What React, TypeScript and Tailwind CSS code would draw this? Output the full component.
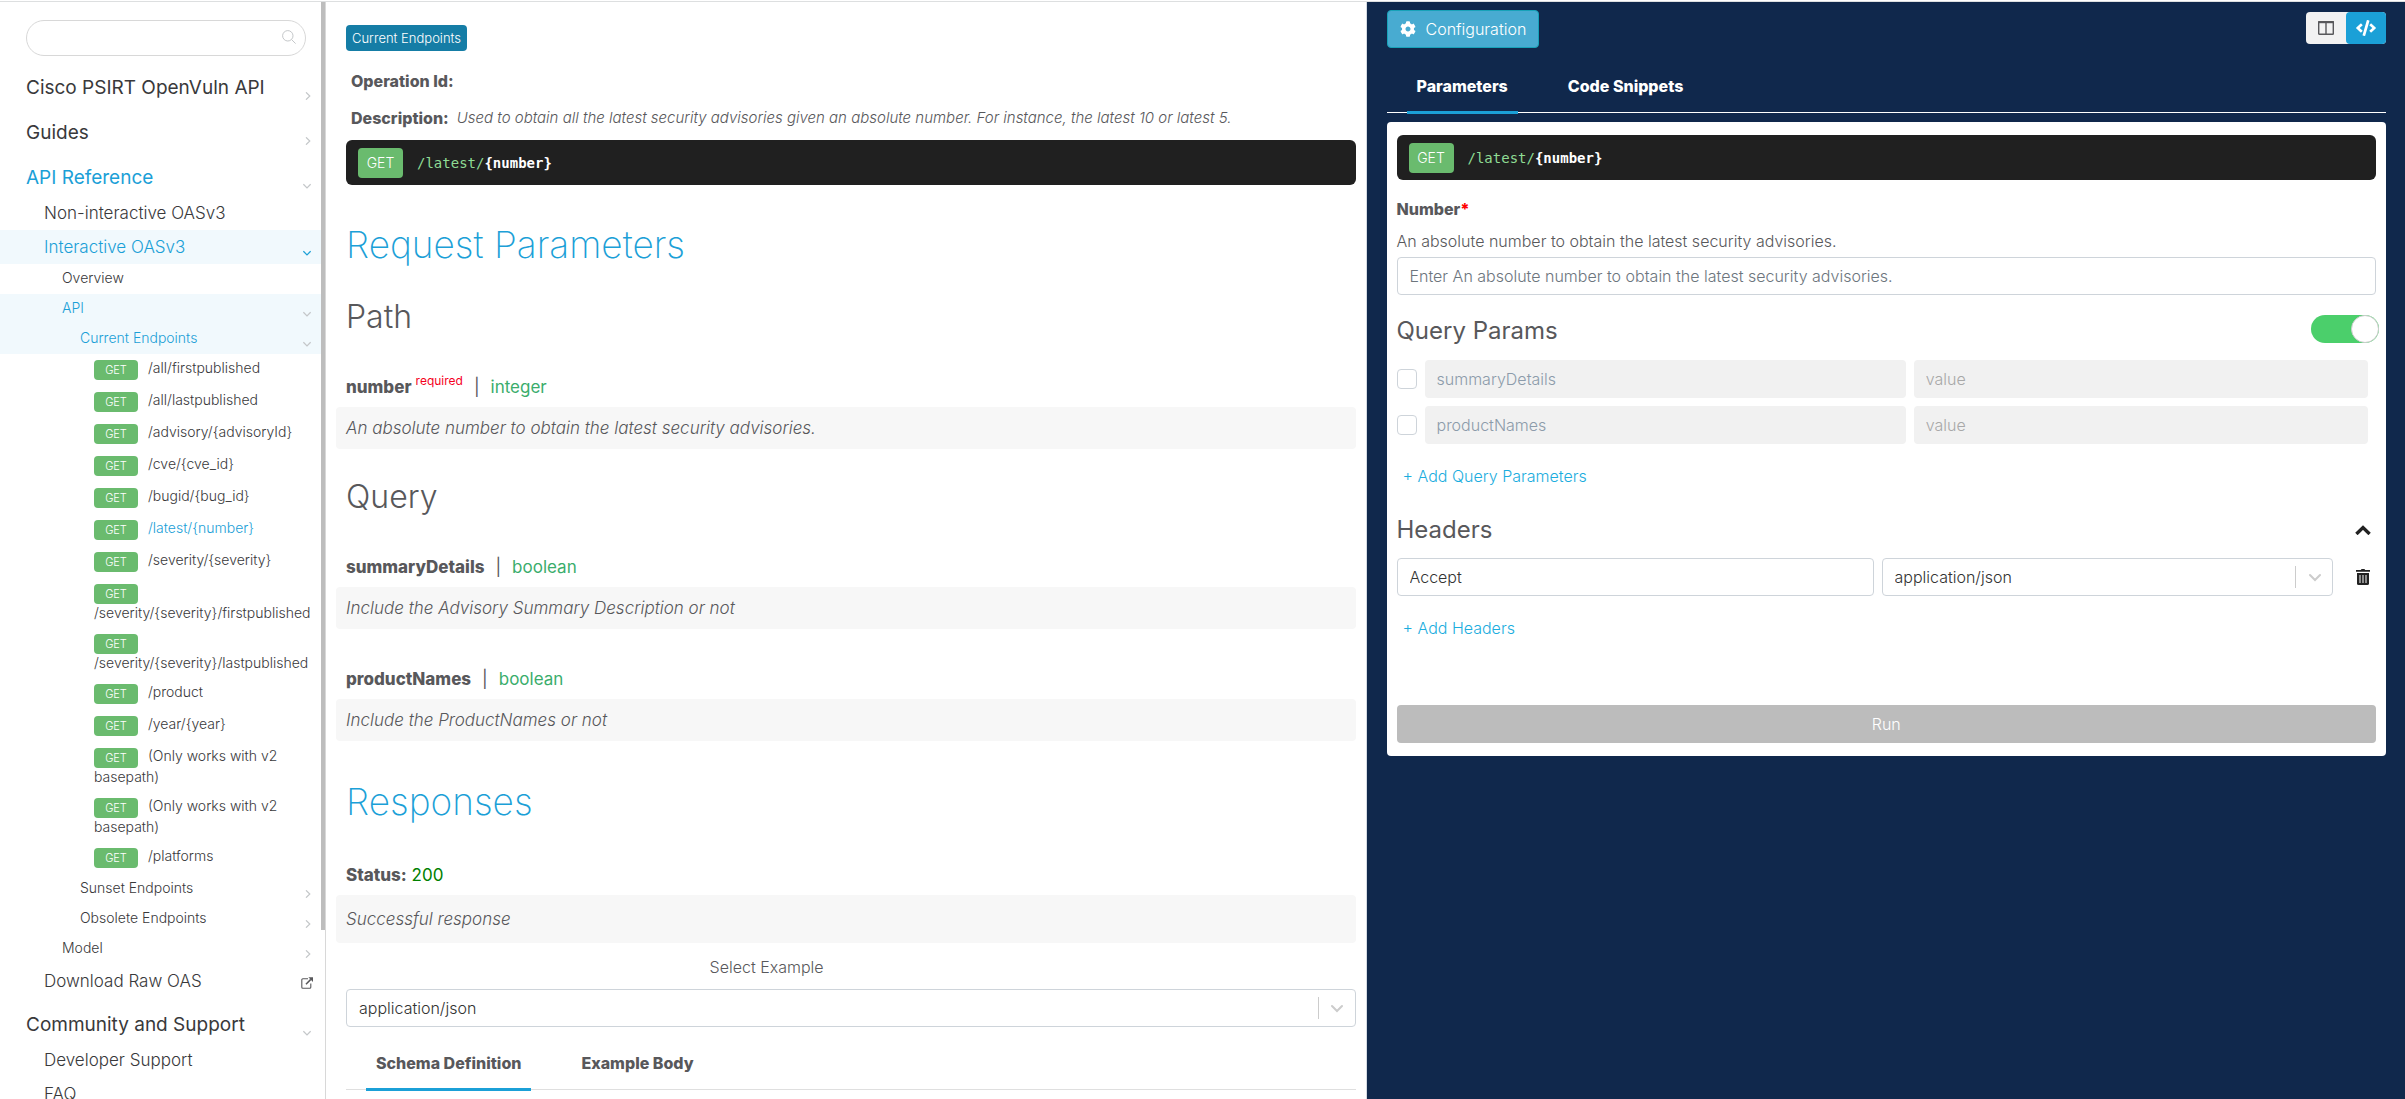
import { useState } from 'react';
import type { ReactNode } from 'react';
import { FaCog, FaCode } from 'react-icons/fa';

type Chevron = 'right' | 'down' | 'external';

interface NavItem {
  label: string;
  level: 1 | 2 | 3 | 4;
  icon?: Chevron;
  active?: boolean;
  highlighted?: boolean;
  iconActive?: boolean;
}

const topNav: NavItem[] = [
  { label: 'Cisco PSIRT OpenVuln API', level: 1, icon: 'right' },
  { label: 'Guides', level: 1, icon: 'right' },
  { label: 'API Reference', level: 1, icon: 'down', active: true },
  { label: 'Non-interactive OASv3', level: 2 },
  { label: 'Interactive OASv3', level: 2, icon: 'down', active: true, highlighted: true, iconActive: true },
  { label: 'Overview', level: 3 },
  { label: 'API', level: 3, icon: 'down', active: true, highlighted: true },
  { label: 'Current Endpoints', level: 4, icon: 'down', active: true, highlighted: true },
];

const endpoints = [
  '/all/firstpublished',
  '/all/lastpublished',
  '/advisory/{advisoryId}',
  '/cve/{cve_id}',
  '/bugid/{bug_id}',
  '/latest/{number}',
  '/severity/{severity}',
  '/severity/{severity}/firstpublished',
  '/severity/{severity}/lastpublished',
  '/product',
  '/year/{year}',
  '(Only works with v2 basepath)',
  '(Only works with v2 basepath)',
  '/platforms',
];

const bottomNav: NavItem[] = [
  { label: 'Sunset Endpoints', level: 4, icon: 'right' },
  { label: 'Obsolete Endpoints', level: 4, icon: 'right' },
  { label: 'Model', level: 3, icon: 'right' },
  { label: 'Download Raw OAS', level: 2, icon: 'external' },
  { label: 'Community and Support', level: 1, icon: 'down' },
  { label: 'Developer Support', level: 2 },
  { label: 'FAQ', level: 2 },
];

const levelStyles: Record<NavItem['level'], { row: string; icon: string }> = {
  1: { row: 'pl-[26px] pt-[15px] pb-[6px] text-[19px] leading-6', icon: 'mt-4' },
  2: { row: 'pl-11 py-[5px] text-[17px] leading-6 font-light', icon: 'mt-[14px]' },
  3: { row: 'pl-[62px] pt-1 pb-[6px] text-sm leading-5 font-light', icon: 'mt-3' },
  4: { row: 'pl-20 pt-1 pb-[6px] text-sm leading-5 font-light', icon: 'mt-3' },
};

function NavIcon({ type }: { type: Chevron }) {
  if (type === 'external') {
    return (
      <svg className="w-3 h-3 text-[#58585b]" viewBox="0 0 12 12" fill="none" stroke="currentColor">
        <path d="M7 1.8H1.8a1 1 0 0 0-1 1v7.4a1 1 0 0 0 1 1h7a1 1 0 0 0 1-1V6.5" strokeWidth="1.1" />
        <path d="M5 7.2L9.8 2.4" strokeWidth="1.5" />
        <path d="M7.4.3H12v4.6z" fill="currentColor" stroke="none" />
      </svg>
    );
  }
  return (
    <svg className="w-2 h-2" viewBox="0 0 8 8" fill="none" stroke="currentColor" strokeWidth="1.2">
      {type === 'down' ? <path d="M.4 2.2L4 5.8l3.6-3.6" /> : <path d="M3 .3L6.8 4 3 7.7" />}
    </svg>
  );
}

function NavRow({ item }: { item: NavItem }) {
  const styles = levelStyles[item.level];
  return (
    <li>
      <a
        href="#"
        className={`flex justify-between pr-[14px] ${styles.row} ${item.active ? 'text-[#1ba0d7]' : 'text-[#39393b]'} ${item.highlighted ? 'bg-[#f1f9fd]' : ''}`}
      >
        <span>{item.label}</span>
        {item.icon && (
          <span className={`${item.icon === 'external' ? 'mt-2 -mr-[2px]' : styles.icon} ${item.iconActive ? 'text-[#1ba0d7]' : 'text-[#c4c7c9]'}`}>
            <NavIcon type={item.icon} />
          </span>
        )}
      </a>
    </li>
  );
}

function Sidebar() {
  return (
    <nav className="relative w-[326px] shrink-0 border-r border-[#d8d8d8] overflow-hidden">
      <div className="relative mt-[18px] mb-[5px] ml-[26px] mr-[19px]">
        <input type="search" aria-label="Search" className="w-full h-9 rounded-full border border-[#d8d8d8] px-4 text-sm outline-none" />
        <svg className="absolute right-[10px] top-[10px] w-[14px] h-[14px]" viewBox="0 0 14 14" fill="none" stroke="#c4c7c9">
          <circle cx="5.8" cy="5.8" r="5.2" />
          <path d="M9.6 9.6l4 4" />
        </svg>
      </div>
      <ul>
        {topNav.map((item) => (
          <NavRow key={item.label} item={item} />
        ))}
        {endpoints.map((path, i) => (
          <li key={i}>
            <a
              href="#"
              className={`block pl-[94px] pr-4 pt-[5px] pb-[6px] text-sm leading-[18px] font-light ${path === '/latest/{number}' ? 'text-[#1ba0d7]' : 'text-[#39393b]'}`}
            >
              <span className="inline-block w-11 h-5 mt-px mr-[6px] rounded-[4px] bg-[#6abb6e] text-center align-middle text-[11px] leading-5 text-white">
                GET
              </span>{' '}
              <span className={path.startsWith('/') ? 'inline-block' : ''}>{path}</span>
            </a>
          </li>
        ))}
        {bottomNav.map((item) => (
          <NavRow key={item.label} item={item} />
        ))}
      </ul>
      {/* Scroll thumb */}
      <div className="absolute top-0 right-0 w-1 h-[928px] bg-[#bdbdbd]" />
    </nav>
  );
}

function EndpointBar() {
  return (
    <div className="flex items-center h-[45px] px-3 rounded-md bg-[#202020]">
      <span className="w-[45px] h-[30px] rounded-[4px] bg-[#6abb6e] text-center text-sm leading-[30px] font-light text-white">GET</span>
      <code className="ml-[14px] font-['DejaVu_Sans_Mono',monospace] text-sm text-[#8fdc94]">
        /latest/<b className="text-white">{'{number}'}</b>
      </code>
    </div>
  );
}

interface SelectBoxProps {
  id: string;
  value: string;
  label?: string;
  className?: string;
}

function SelectBox({ id, value, label, className }: SelectBoxProps) {
  return (
    <div className={`relative ${className ?? ''}`}>
      <select
        id={id}
        aria-label={label}
        defaultValue={value}
        className="block w-full h-[38px] appearance-none rounded-[4px] border border-[#ced4da] bg-white px-3 text-base font-light text-[#333] outline-none"
      >
        <option>{value}</option>
      </select>
      <span className="pointer-events-none absolute right-0 inset-y-2 flex w-[38px] items-center justify-center border-l border-[#ccc]">
        <svg className="w-3 h-3" viewBox="0 0 12 12" fill="none" stroke="#ccc" strokeWidth="2" strokeLinecap="round">
          <path d="M1 4l5 5 5-5" />
        </svg>
      </span>
    </div>
  );
}

function Param({ name, type, required, children }: { name: string; type: string; required?: boolean; children: ReactNode }) {
  return (
    <section>
      <h4 className="flex items-center text-[17px] leading-6">
        <b className="font-extrabold">{name}</b>
        {required && <span className="ml-1 pb-3 text-xs leading-3 text-[#f5001d]">required</span>}
        <span className="mx-[11px]">|</span>
        <span className="text-[#3aad6c]">{type}</span>
      </h4>
      <p className="mt-2 -ml-[10px] px-[10px] py-[9px] rounded-[4px] bg-[#f7f7f7] text-[17px] leading-6 font-light italic">{children}</p>
    </section>
  );
}

function Tabs({ tabs, dark }: { tabs: string[]; dark?: boolean }) {
  const [selected, setSelected] = useState(tabs[0]);
  return (
    <div
      className={`flex gap-10 pl-5 ${dark ? 'shadow-[inset_0_-1px_0_#10284c,inset_0_-2px_0_#fff] text-white' : 'shadow-[inset_0_-1px_0_#fff,inset_0_-2px_0_#dfdfdf]'}`}
      role="tablist"
    >
      {tabs.map((tab) => (
        <button
          key={tab}
          role="tab"
          aria-selected={tab === selected}
          onClick={() => setSelected(tab)}
          className={`px-[10px] py-[13px] border-b-[3px] text-base leading-6 font-extrabold ${tab === selected ? 'border-[#1ba0d7]' : 'border-transparent'}`}
        >
          {tab}
        </button>
      ))}
    </div>
  );
}

function Docs() {
  return (
    <main className="flex-1 min-w-0 pl-5 pr-[10px] pt-[23px] border-r border-[#d5dbe3]">
      <span className="inline-block px-[6px] rounded-[4px] bg-[#157da6] text-[13px] leading-[26px] font-light text-white">Current Endpoints</span>
      <dl className="mt-[18px] pl-[5px] text-base leading-6">
        <dt className="font-extrabold">Operation Id:</dt>
        <div className="mt-[13px] flex gap-2">
          <dt className="font-extrabold">Description:</dt>
          <dd className="text-[15px] font-light italic">
            Used to obtain all the latest security advisories given an absolute number. For instance, the latest 10 or latest 5.
          </dd>
        </div>
      </dl>
      <div className="mt-[10px]">
        <EndpointBar />
      </div>

      <h2 className="mt-10 text-[37px] leading-10 font-extralight text-[#1ba0d7]">Request Parameters</h2>
      <h3 className="mt-8 text-[32px] leading-10 font-light">Path</h3>
      <div className="mt-[38px]">
        <Param name="number" type="integer" required>
          An absolute number to obtain the latest security advisories.
        </Param>
      </div>
      <h3 className="mt-7 text-[32px] leading-10 font-light">Query</h3>
      <div className="mt-[38px] flex flex-col gap-[38px]">
        <Param name="summaryDetails" type="boolean">
          Include the Advisory Summary Description or not
        </Param>
        <Param name="productNames" type="boolean">
          Include the ProductNames or not
        </Param>
      </div>

      <h2 className="mt-[41px] text-[37px] leading-10 font-extralight text-[#1ba0d7]">Responses</h2>
      <p className="mt-[41px] text-[17px] leading-6">
        <b className="font-extrabold">Status:</b> <span className="text-[#008000]">200</span>
      </p>
      <p className="mt-2 -ml-[10px] px-[10px] py-3 rounded-[4px] bg-[#f7f7f7] text-[17px] leading-6 font-light italic">Successful response</p>
      <div className="mt-3 w-5/6 text-center">
        <label htmlFor="example-type" className="text-base leading-6 font-light">
          Select Example
        </label>
      </div>
      <SelectBox id="example-type" value="application/json" className="mt-[10px]" />
      <div className="mt-[11px]">
        <Tabs tabs={['Schema Definition', 'Example Body']} />
      </div>
    </main>
  );
}

function QueryRow({ name }: { name: string }) {
  return (
    <div className="flex items-center gap-2 pr-2">
      <input type="checkbox" aria-label={`Use ${name}`} className="w-5 h-5 shrink-0 appearance-none rounded-[4px] border border-[#ced4da] bg-white" />
      <input
        type="text"
        aria-label={`${name} key`}
        defaultValue={name}
        disabled
        className="flex-[51] min-w-0 h-[38px] px-3 rounded-[4px] bg-[#f1f1f1] text-base font-light text-[#8c9baa]"
      />
      <input
        type="text"
        aria-label={`${name} value`}
        placeholder="value"
        disabled
        className="flex-[48] min-w-0 h-[38px] px-3 rounded-[4px] bg-[#f1f1f1] text-base font-light placeholder:text-[#a8a8a8]"
      />
    </div>
  );
}

function TryIt() {
  return (
    <aside className="w-[calc(50%-164px)] shrink-0 pl-5 pr-[19px] pt-2 bg-[#10284c]">
      <div className="flex justify-between items-start">
        <button className="flex items-center gap-[10px] h-[38px] px-3 rounded-[4px] border border-[#17a2b8] bg-[#48abd1] text-base font-light text-white">
          <FaCog size={16} />
          Configuration
        </button>
        <div className="mt-[2px] flex w-20 h-8 rounded-[4px] bg-[#f2f2f2]">
          <button aria-label="Split view" className="flex flex-1 items-center justify-center">
            <svg className="w-4 h-[14px]" viewBox="0 0 16 14" fill="none" stroke="#58585b" strokeWidth="1.4">
              <rect x=".7" y=".7" width="14.6" height="12.6" rx=".6" />
              <path d="M0 1.2h16" strokeWidth="2" />
              <path d="M8 1v12" />
            </svg>
          </button>
          <button aria-label="Code view" className="flex flex-1 items-center justify-center rounded-[4px] bg-[#1ba0d7] text-white">
            <FaCode size={20} />
          </button>
        </div>
      </div>
      <div className="mt-[13px]">
        <Tabs tabs={['Parameters', 'Code Snippets']} dark />
      </div>

      <div className="mt-2 px-[10px] py-[13px] rounded-[4px] bg-white">
        <EndpointBar />
        <label htmlFor="number" className="mt-[17px] block text-base leading-6 font-extrabold">
          Number<span className="text-[#f00]">*</span>
        </label>
        <p className="mt-2 text-base leading-6 font-light">An absolute number to obtain the latest security advisories.</p>
        <input
          id="number"
          type="text"
          placeholder="Enter An absolute number to obtain the latest security advisories."
          className="mt-1 block w-full h-[38px] px-3 rounded-[4px] border border-[#ced4da] text-base font-light outline-none placeholder:text-[#6c757d]"
        />

        <div className="mt-5 -mr-[3px] flex items-start justify-between">
          <h3 className="text-2xl">
            <label htmlFor="query-toggle">Query Params</label>
          </h3>
          <span className="relative block w-[68px] h-7">
            <input
              id="query-toggle"
              type="checkbox"
              role="switch"
              defaultChecked
              className="peer block w-full h-full appearance-none rounded-full bg-[#ccc] checked:bg-[#4bcf6b]"
            />
            <span className="pointer-events-none absolute left-0 top-0 w-7 h-7 rounded-full border border-[#ccc] bg-white peer-checked:left-10" />
          </span>
        </div>
        <div className="mt-[13px] flex flex-col gap-2">
          <QueryRow name="summaryDetails" />
          <QueryRow name="productNames" />
        </div>
        <button className="mt-5 ml-[6px] block text-base leading-6 font-light text-[#1badde]">+ Add Query Parameters</button>

        <div className="mt-[26px] pr-[5px] flex items-center justify-between">
          <h3 className="text-2xl">Headers</h3>
          <button aria-label="Collapse headers">
            <svg className="w-4 h-[10px]" viewBox="0 0 16 10" fill="none" stroke="#222" strokeWidth="3.4">
              <path d="M1.4 9L8 2.6 14.6 9" />
            </svg>
          </button>
        </div>
        <div className="mt-3 pr-[6px] flex items-center">
          <input
            type="text"
            aria-label="Header name"
            defaultValue="Accept"
            className="w-[49%] shrink-0 h-[38px] px-3 rounded-[4px] border border-[#ced4da] text-base font-light text-[#333] outline-none"
          />
          <SelectBox id="accept" label="Header value" value="application/json" className="ml-2 flex-1" />
          <button aria-label="Delete header" className="ml-[23px]">
            <svg className="w-[14px] h-4" viewBox="0 0 14 16" fill="#222">
              <path d="M0 1h4.8L5.6 0h2.8l.8 1H14v1.8H0z" />
              <path d="M1 4h12v10.4a1.6 1.6 0 0 1-1.6 1.6H2.6A1.6 1.6 0 0 1 1 14.400z" />
              <path d="M4 6v8M7 6v8M10 6v8" stroke="#bbb" strokeWidth="1.4" />
            </svg>
          </button>
        </div>
        <button className="mt-5 ml-[6px] block text-base leading-6 font-light text-[#1badde]">+ Add Headers</button>
        <button className="mt-[65px] block w-full h-[38px] rounded-[4px] bg-[#bcbcbc] text-base font-light text-white">Run</button>
      </div>
    </aside>
  );
}

export default function App() {
  return (
    <div className="h-screen overflow-hidden flex flex-col bg-white font-['Inter',sans-serif] text-[#58585b]">
      <div className="h-[2px] shrink-0 border-b border-[#dddfe0]" />
      <div className="flex flex-1 min-h-0">
        <Sidebar />
        <Docs />
        <TryIt />
      </div>
    </div>
  );
}
